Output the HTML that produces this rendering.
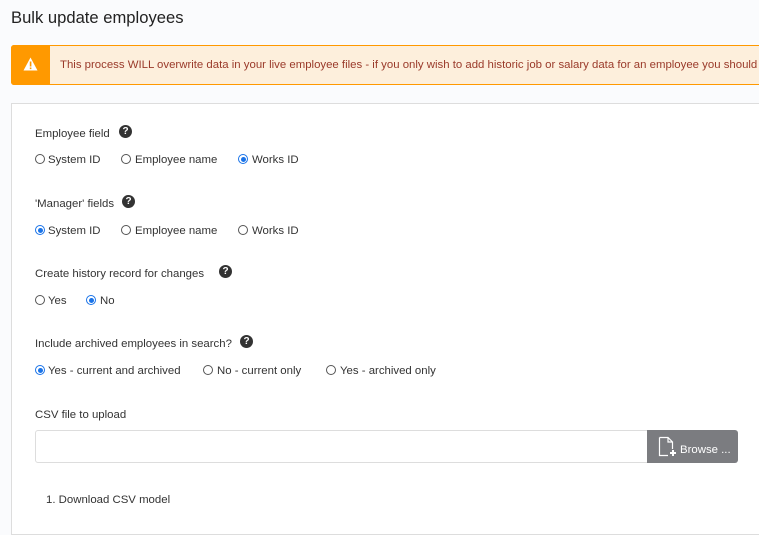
<!DOCTYPE html><html><head><style>
body{margin:0;width:759px;height:524px;overflow:hidden;background:#fafbfd;font-family:"Liberation Sans",sans-serif;color:#333;position:relative}
.a{position:absolute;white-space:nowrap;font-size:11.4px;line-height:14px}
.r{position:absolute;width:8px;height:8px;border:1px solid #555;border-radius:50%;background:#fff}
.r.on{border-color:#1a73e8}
.r.on::after{content:"";position:absolute;left:1.5px;top:1.5px;width:5px;height:5px;border-radius:50%;background:#1a73e8}
.h{position:absolute;width:13px;height:13px;border-radius:50%;background:#333;color:#fff;font-size:10px;font-weight:bold;line-height:13px;text-align:center}
</style></head><body>
<div class="a" style="left:11px;top:8px;font-size:16.6px;line-height:20px;color:#222">Bulk update employees</div>
<div style="position:absolute;left:11px;top:45px;width:760px;height:38px;background:#fdefdc;border:1px solid #f90;border-radius:3px"></div>
<div style="position:absolute;left:11px;top:45px;width:39px;height:40px;background:#f90;border-radius:3px 0 0 3px"></div>
<svg style="position:absolute;left:23px;top:57px" width="15" height="14" viewBox="0 0 15 14"><path d="M7.5 0.5L14.5 13.5H0.5Z" fill="#fff"/><rect x="6.8" y="4.5" width="1.6" height="5" fill="#f90"/><rect x="6.8" y="10.5" width="1.6" height="1.6" fill="#f90"/></svg>
<div class="a" style="left:60px;top:58px;color:#9a3a2a">This process WILL overwrite data in your live employee files - if you only wish to add historic job or salary data for an employee you should</div>
<div style="position:absolute;left:11px;top:103px;width:760px;height:430px;background:#fff;border:1px solid #ddd"></div>

<div class="a" style="left:35px;top:127px">Employee field</div><div class="h" style="left:119px;top:125px">?</div>
<div class="r" style="left:35px;top:154px"></div><div class="a" style="left:48px;top:153px">System ID</div>
<div class="r" style="left:121px;top:154px"></div><div class="a" style="left:135px;top:153px">Employee name</div>
<div class="r on" style="left:238px;top:154px"></div><div class="a" style="left:252px;top:153px">Works ID</div>

<div class="a" style="left:35px;top:197px">'Manager' fields</div><div class="h" style="left:122px;top:195px">?</div>
<div class="r on" style="left:35px;top:225px"></div><div class="a" style="left:48px;top:224px">System ID</div>
<div class="r" style="left:121px;top:225px"></div><div class="a" style="left:135px;top:224px">Employee name</div>
<div class="r" style="left:238px;top:225px"></div><div class="a" style="left:252px;top:224px">Works ID</div>

<div class="a" style="left:35px;top:267px">Create history record for changes</div><div class="h" style="left:219px;top:265px">?</div>
<div class="r" style="left:35px;top:295px"></div><div class="a" style="left:48px;top:294px">Yes</div>
<div class="r on" style="left:86px;top:295px"></div><div class="a" style="left:100px;top:294px">No</div>

<div class="a" style="left:35px;top:337px">Include archived employees in search?</div><div class="h" style="left:240px;top:335px">?</div>
<div class="r on" style="left:35px;top:365px"></div><div class="a" style="left:48px;top:364px">Yes - current and archived</div>
<div class="r" style="left:203px;top:365px"></div><div class="a" style="left:217px;top:364px">No - current only</div>
<div class="r" style="left:326px;top:365px"></div><div class="a" style="left:340px;top:364px">Yes - archived only</div>

<div class="a" style="left:35px;top:408px">CSV file to upload</div>
<div style="position:absolute;left:35px;top:430px;width:612px;height:31px;border:1px solid #ddd;border-radius:3px 0 0 3px;background:#fff"></div>
<div style="position:absolute;left:647px;top:430px;width:91px;height:33px;background:#7b7c80;border-radius:0 3px 3px 0"></div>
<svg style="position:absolute;left:658px;top:436px" width="20" height="22" viewBox="0 0 20 22"><path d="M1.5 1.5H10L14.5 6V13M1.5 1.5V19.5H10M10 1.5V6H14.5" fill="none" stroke="#fff" stroke-width="1.2"/><path d="M15 14V20M12 17H18" stroke="#fff" stroke-width="2"/></svg>
<div class="a" style="left:680px;top:443px;color:#fff">Browse ...</div>
<div class="a" style="left:46px;top:493px">1. Download CSV model</div>
</body></html>
